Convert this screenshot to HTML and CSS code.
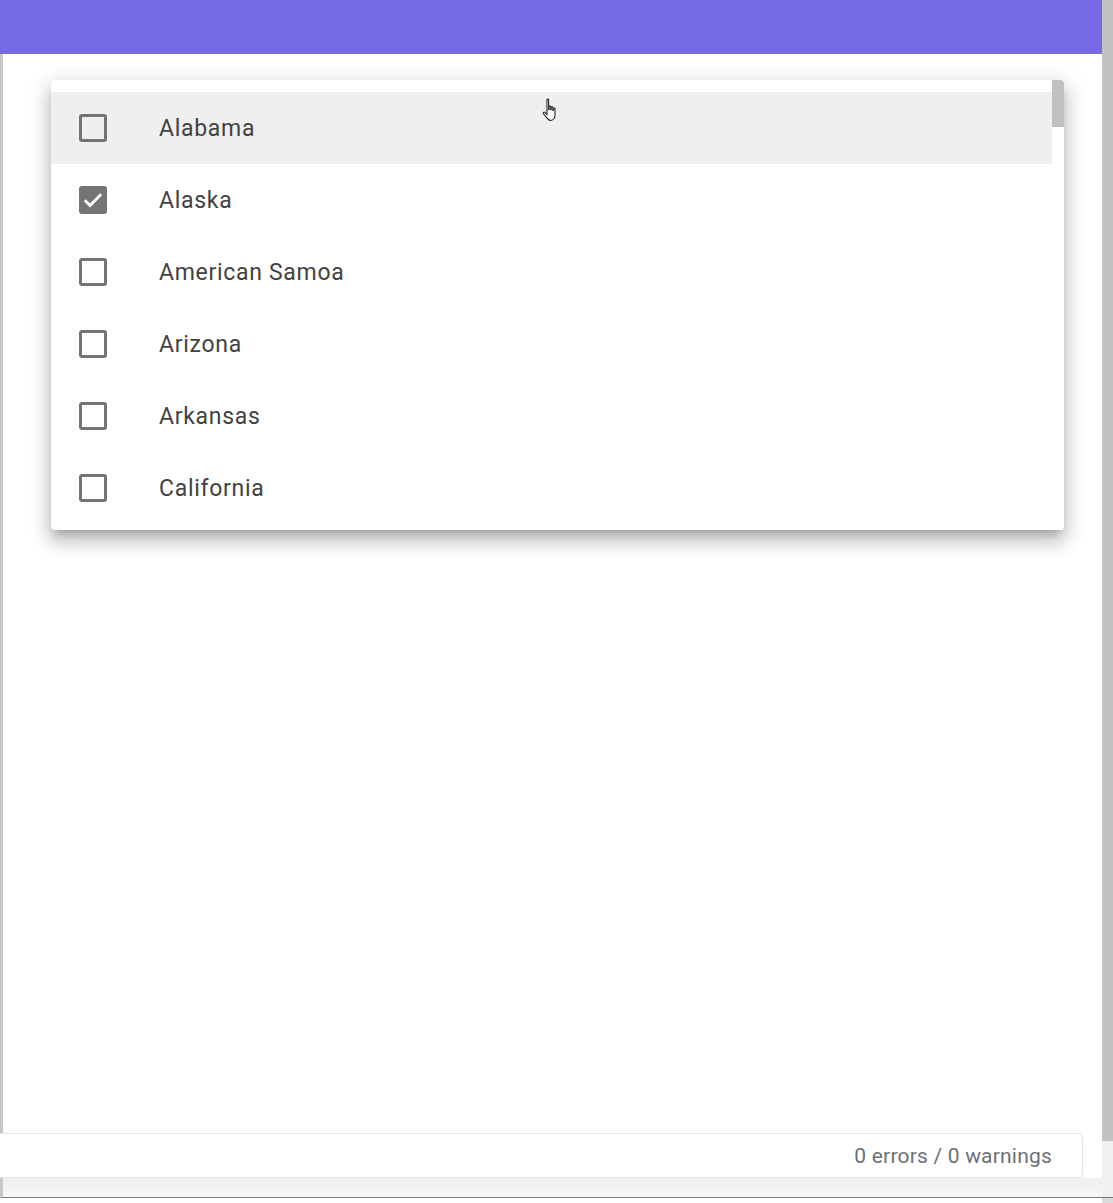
FILE: index.html
```html
<!DOCTYPE html>
<html lang="en">
<head>
<meta charset="utf-8">
<title>States</title>
<link rel="stylesheet" href="styles.css">
</head>
<body>
<div class="app">
  <div class="main">
    <header class="topbar"></header>
    <div class="content">
      <div class="panel">
        <ul class="list">
          <li class="item hover"><span class="box"></span><span class="label">Alabama</span></li>
          <li class="item"><span class="box checked"><svg class="check" viewBox="0 0 22 22" width="22" height="22"><path d="M2.8 11.2l5.2 5.2L19.2 5.2" fill="none" stroke="#fff" stroke-width="2.8"/></svg></span><span class="label">Alaska</span></li>
          <li class="item"><span class="box"></span><span class="label">American Samoa</span></li>
          <li class="item"><span class="box"></span><span class="label">Arizona</span></li>
          <li class="item"><span class="box"></span><span class="label">Arkansas</span></li>
          <li class="item"><span class="box"></span><span class="label">California</span></li>
        </ul>
        <div class="panel-scroll"><div class="panel-thumb"></div></div>
      </div>
    </div>
    <footer class="footer"><span class="status">0 errors / 0 warnings</span></footer>
    <div class="bottom-strip"></div>
  </div>
  <div class="page-scroll"><div class="page-thumb"></div></div>
</div>
<svg class="cursor" viewBox="0 0 16 22" width="19" height="26"><path d="M5 1.5c0-.8 1.4-.8 1.4 0V10h.4V7.3c0-.8 1.4-.8 1.4 0V10h.4V8c0-.8 1.4-.8 1.4 0V10.5h.4V9c0-.8 1.4-.8 1.4 0v5.5c0 2.5-1.6 4.5-4.2 4.5H8.5c-1.6 0-2.6-.8-3.4-2L2 13.2c-.6-.9.5-1.7 1.2-1L5 14V1.5z" fill="#fff" stroke="#222" stroke-width="0.9"/></svg>
</body>
</html>
```
FILE: styles.css
```css
html, body {
  margin: 0;
  padding: 0;
  background: #ffffff;
  font-family: Roboto, "Liberation Sans", Arial, sans-serif;
}

.app {
  width: 1113px;
  height: 1203px;
  display: flex;
  overflow: hidden;
  background: #dcdcdc;
}

.main {
  width: 1102px;
  display: flex;
  flex-direction: column;
  background: #ffffff;
}

.topbar {
  height: 54px;
  flex: none;
  background: #7569e6;
}

.content {
  flex: none;
  height: 1079px;
  border-left: 3px solid #c8c8c8;
  box-sizing: border-box;
  padding: 26px 0 0 48px;
}

.panel {
  width: 1013px;
  height: 450px;
  display: flex;
  background: #ffffff;
  border-radius: 4px;
  overflow: hidden;
  box-shadow: 0 7px 8px -4px rgba(0,0,0,.2), 0 12px 17px 2px rgba(0,0,0,.14), 0 5px 22px 4px rgba(0,0,0,.12);
}

.list {
  list-style: none;
  margin: 0;
  padding: 12px 0 0;
  flex: 1;
}

.item {
  height: 72px;
  display: flex;
  align-items: center;
  padding-left: 28px;
}

.item.hover {
  background: #efefef;
}

.box {
  width: 28px;
  height: 28px;
  box-sizing: border-box;
  border: 3px solid #747474;
  border-radius: 3px;
  flex: none;
  display: flex;
  align-items: center;
  justify-content: center;
}

.box.checked {
  background: #747474;
}

.check {
  flex: none;
  display: block;
}

.label {
  margin-left: 52px;
  font-size: 23px;
  color: #424242;
  letter-spacing: 0.7px;
}

.panel-scroll {
  width: 12px;
  flex: none;
  background: #ffffff;
}

.panel-thumb {
  height: 47px;
  background: #c1c1c1;
}

.footer {
  height: 45px;
  flex: none;
  width: 1083px;
  box-sizing: border-box;
  background: #ffffff;
  border: 1px solid #e6e6e6;
  border-left: none;
  border-radius: 0 5px 5px 0;
  box-shadow: 0 1px 3px rgba(0,0,0,.06);
  display: flex;
  align-items: center;
  justify-content: flex-end;
  padding-right: 30px;
}

.status {
  font-size: 21px;
  color: #6c7078;
  letter-spacing: 0.2px;
}

.bottom-strip {
  height: 19px;
  flex: none;
  border-left: 3px solid #c8c8c8;
  background: linear-gradient(#efefef, #f7f7f7);
  border-bottom: 1px solid #7a7a7a;
}

.page-scroll {
  width: 11px;
  flex: none;
  height: 1197px;
  background: #f1f1f1;
  border-bottom: 1px solid #7a7a7a;
}

.page-thumb {
  height: 1141px;
  background: #c1c1c1;
}

.cursor {
  position: absolute;
  left: 541px;
  top: 98px;
}
```
